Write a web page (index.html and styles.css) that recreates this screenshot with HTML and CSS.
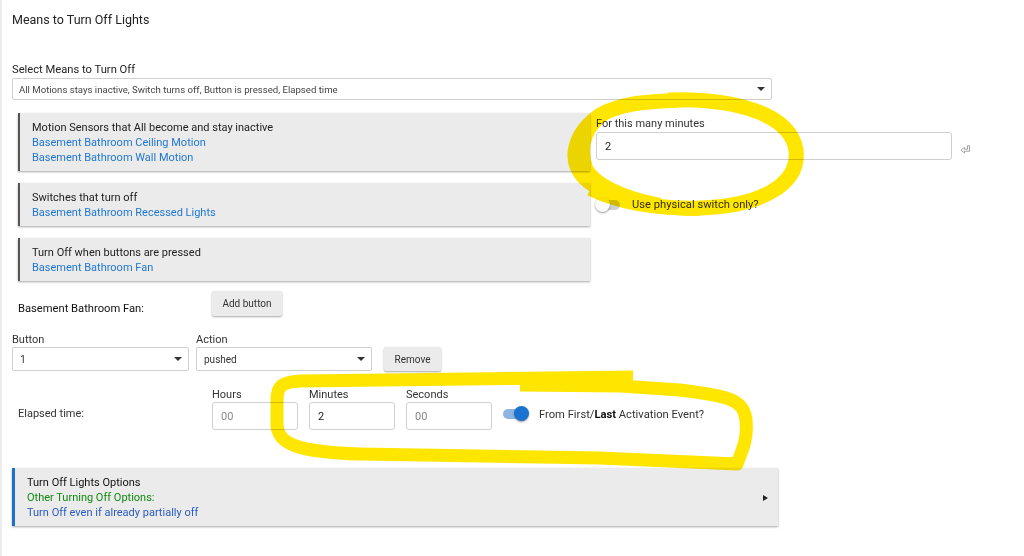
FILE: index.html
```html
<!DOCTYPE html>
<html lang="en">
<head>
    <meta charset="UTF-8">
    <title>Means to Turn Off Lights</title>
    <link rel="stylesheet" href="styles.css">
</head>
<body>
    <div class="page">
        <h2 class="title">Means to Turn Off Lights</h2>

        <div class="label means-label">Select Means to Turn Off</div>
        <div class="select means-select">
            <span>All Motions stays inactive, Switch turns off, Button is pressed, Elapsed time</span>
            <span class="caret"></span>
        </div>

        <div class="cards">
            <div class="card">
                <div>Motion Sensors that All become and stay inactive</div>
                <div class="link">Basement Bathroom Ceiling Motion</div>
                <div class="link">Basement Bathroom Wall Motion</div>
            </div>
            <div class="side side-minutes">
                <div class="label">For this many minutes</div>
                <div class="input-line">
                    <div class="input wide-input">2</div>
                    <svg class="enter-icon" width="11" height="9" viewBox="0 0 11 9">
                        <path d="M7.5 0.8 L9.5 0.8 L9.5 6.2 L4.5 6.2 L4.5 8 L1 5.2 L4.5 2.4 L4.5 4.2 L7.5 4.2 Z" fill="none" stroke="#999" stroke-width="0.9" stroke-linejoin="round"/>
                    </svg>
                </div>
            </div>

            <div class="card">
                <div>Switches that turn off</div>
                <div class="link">Basement Bathroom Recessed Lights</div>
            </div>
            <div class="side side-toggle">
                <span class="toggle"><span class="knob"></span></span>
                <span class="toggle-label">Use physical switch only?</span>
            </div>

            <div class="card">
                <div>Turn Off when buttons are pressed</div>
                <div class="link">Basement Bathroom Fan</div>
            </div>
            <div class="side"></div>
        </div>

        <div class="fan-row">
            <div class="row-name fan-name">Basement Bathroom Fan:</div>
            <button class="btn add-btn">Add button</button>
        </div>

        <div class="button-row">
            <div class="field">
                <div class="label">Button</div>
                <div class="select small-select"><span>1</span><span class="caret"></span></div>
            </div>
            <div class="field">
                <div class="label">Action</div>
                <div class="select small-select action-select"><span>pushed</span><span class="caret"></span></div>
            </div>
            <button class="btn remove-btn">Remove</button>
        </div>

        <div class="elapsed-row">
            <div class="row-name elapsed-name">Elapsed time:</div>
            <div class="field">
                <div class="label">Hours</div>
                <div class="input time-input placeholder">00</div>
            </div>
            <div class="field">
                <div class="label">Minutes</div>
                <div class="input time-input">2</div>
            </div>
            <div class="field">
                <div class="label">Seconds</div>
                <div class="input time-input placeholder">00</div>
            </div>
            <div class="elapsed-toggle">
                <span class="toggle on"><span class="knob"></span></span>
                <span class="toggle-label">From First/<b>Last</b> Activation Event?</span>
            </div>
        </div>

        <div class="options">
            <div>
                <div>Turn Off Lights Options</div>
                <div class="green">Other Turning Off Options:</div>
                <div class="dark-link">Turn Off even if already partially off</div>
            </div>
            <span class="arrow-right"></span>
        </div>
    </div>

    <!-- highlighter marks drawn over the page -->
    <svg class="marks" width="1024" height="556" viewBox="0 0 1024 556">
        <path d="M668 100 C730 98 790 112 796 150 C800 185 760 206 700 208 C650 210 600 196 582 175 C570 160 572 135 600 115 C620 104 640 102 680 100"
              fill="none" stroke="#ffe600" stroke-width="15" stroke-linecap="butt"/>
        <path d="M610 112 C588 125 580 145 588 168 C596 182 620 195 660 203" fill="none" stroke="#ffe600" stroke-width="10"/>
        <path d="M590 190 C620 205 660 210 700 210" fill="none" stroke="#ffe600" stroke-width="12"/>
        <path d="M633 377 L300 381 C282 382 277 386 277 400 L277 425 C278 445 300 452 360 454 L600 458 L737 464 C742 450 748 440 746 420 C744 400 730 396 680 390 L620 386 L520 385"
              fill="none" stroke="#ffe600" stroke-width="13" stroke-linejoin="round"/>
    </svg>
</body>
</html>
```

FILE: styles.css
```css
* {
    box-sizing: border-box;
}
body {
    margin: 0;
    background: #fff;
    font-family: Roboto, "Liberation Sans", Arial, sans-serif;
    color: #222;
}
.page {
    position: relative;
    width: 1024px;
    height: 556px;
    border-left: 2px solid #ececec;
    padding-left: 10px;
    overflow: hidden;
}
.title {
    margin: 12px 0 0;
    font-size: 12.5px;
    font-weight: 400;
    line-height: 16px;
    color: #222;
}
.label {
    font-size: 11px;
    line-height: 14px;
    color: #333;
}
.means-label {
    margin-top: 35px;
    font-size: 11.2px;
    color: #222;
}
.select {
    display: flex;
    align-items: center;
    justify-content: space-between;
    border: 1px solid #cfcfcf;
    border-radius: 2px;
    background: #fff;
    padding: 0 6px 0 8px;
    font-size: 10px;
    color: #333;
}
.means-select {
    margin-top: 1px;
    width: 760px;
    height: 22px;
    padding-left: 6px;
    font-size: 9.6px;
    color: #444;
}
.caret {
    width: 0;
    height: 0;
    border-left: 4px solid transparent;
    border-right: 4px solid transparent;
    border-top: 4px solid #333;
}
.cards {
    display: grid;
    grid-template-columns: 572px 1fr;
    column-gap: 6px;
    row-gap: 12px;
    margin: 13px 0 0 6px;
}
.card {
    background: #ebebeb;
    border-left: 2px solid #555;
    box-shadow: 0 1px 2px rgba(0, 0, 0, 0.35);
    padding: 7px 12px 6px;
    font-size: 11px;
    line-height: 15px;
    color: #222;
}
.link {
    color: #1f77d0;
}
.side-minutes {
    padding-top: 4px;
}
.input-line {
    display: flex;
    align-items: center;
    margin-top: 1px;
}
.input {
    border: 1px solid #cfcfcf;
    border-radius: 3px;
    background: #fff;
    display: flex;
    align-items: center;
    padding-left: 8px;
    font-size: 11px;
    color: #222;
}
.wide-input {
    width: 356px;
    height: 28px;
}
.enter-icon {
    margin: 6px 0 0 8px;
}
.side-toggle {
    display: flex;
    align-items: center;
}
.toggle {
    position: relative;
    display: inline-block;
    width: 24px;
    height: 10px;
    border-radius: 5px;
    background: #d0d0d0;
}
.toggle .knob {
    position: absolute;
    top: -3px;
    left: -1px;
    width: 15px;
    height: 15px;
    border-radius: 50%;
    background: #fafafa;
    box-shadow: 0 1px 2px rgba(0, 0, 0, 0.4);
}
.toggle.on {
    background: #8db5e2;
}
.toggle.on .knob {
    left: auto;
    right: -2px;
    background: #1a73d0;
}
.toggle-label {
    margin-left: 12px;
    font-size: 11.2px;
    color: #333;
}
.toggle-label b {
    font-weight: 700;
    color: #111;
}
.fan-row {
    display: flex;
    align-items: center;
    margin-top: 10px;
    padding-left: 6px;
}
.row-name {
    width: 194px;
    font-size: 11.2px;
    color: #111;
}
.fan-name {
    padding-top: 9px;
}
.btn {
    border: none;
    border-radius: 2px;
    background: #ebebeb;
    box-shadow: 0 1px 2px rgba(0, 0, 0, 0.35);
    font-family: Roboto, "Liberation Sans", Arial, sans-serif;
    font-size: 10px;
    color: #333;
    padding: 0;
}
.add-btn {
    width: 70px;
    height: 25px;
}
.button-row {
    display: flex;
    align-items: flex-end;
    gap: 7px;
    margin-top: 15px;
}
.field .label {
    padding-top: 2px;
}
.small-select {
    width: 177px;
    height: 24px;
    padding-left: 7px;
    font-size: 10.5px;
}
.action-select {
    width: 176px;
    font-size: 10px;
}
.remove-btn {
    width: 57px;
    height: 24px;
    margin-left: 5px;
}
.elapsed-row {
    display: flex;
    align-items: flex-end;
    gap: 11px;
    margin-top: 15px;
    padding-left: 6px;
}
.elapsed-name {
    width: 183px;
    font-size: 11px;
    color: #333;
    line-height: 20px;
    margin-bottom: 6px;
}
.time-input {
    width: 86px;
    height: 28px;
}
.placeholder {
    color: #888;
}
.elapsed-toggle {
    display: flex;
    align-items: center;
    height: 28px;
    padding-bottom: 4px;
}
.options {
    display: flex;
    align-items: center;
    justify-content: space-between;
    width: 766px;
    height: 58px;
    margin-top: 38px;
    background: #ebebeb;
    border-left: 3px solid #1d70cc;
    box-shadow: 0 1px 2px rgba(0, 0, 0, 0.35);
    padding: 0 10px 0 12px;
    font-size: 11px;
    line-height: 15px;
    color: #111;
}
.green {
    color: #118a11;
}
.dark-link {
    color: #2a5cc0;
}
.arrow-right {
    width: 0;
    height: 0;
    border-top: 3.5px solid transparent;
    border-bottom: 3.5px solid transparent;
    border-left: 5px solid #222;
    margin-top: 2px;
}
.marks {
    position: absolute;
    left: 0;
    top: 0;
    pointer-events: none;
    mix-blend-mode: multiply;
}
```
